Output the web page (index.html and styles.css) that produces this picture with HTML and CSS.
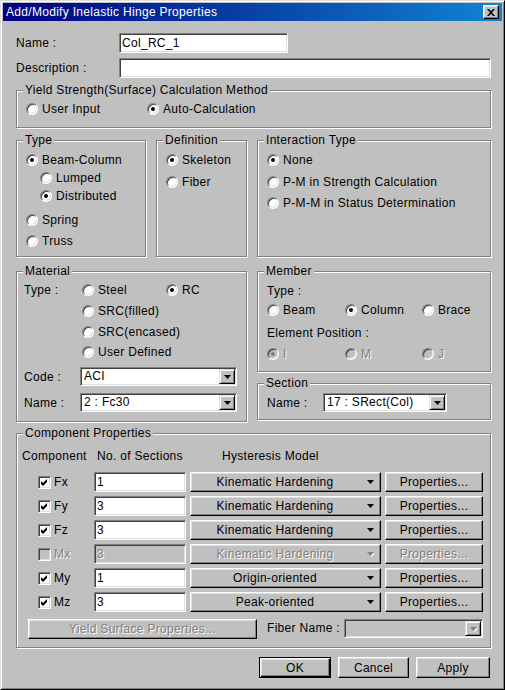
FILE: index.html
```html
<!DOCTYPE html>
<html>
<head>
<meta charset="utf-8">
<title>Add/Modify Inelastic Hinge Properties</title>
<link rel="stylesheet" href="styles.css">
</head>
<body>
<div class="win">
  <div class="titlebar">
    <span class="title">Add/Modify Inelastic Hinge Properties</span>
    <span class="close"><svg width="8" height="7" viewBox="0 0 8 7"><path d="M0 0h2l2 2.2L6 0h2L5 3.5 8 7H6L4 4.8 2 7H0l3-3.5z" fill="#000"/></svg></span>
  </div>
  <div class="content">
    <div class="frow r-name"><span class="flabel">Name :</span><span class="edit w-name">Col_RC_1</span></div>
    <div class="frow r-desc"><span class="flabel">Description :</span><span class="edit w-desc"></span></div>

    <div class="group g-yield">
      <div class="gt">Yield Strength(Surface) Calculation Method</div>
      <div class="gbody pl9">
        <div class="line mt4">
          <span class="opt w121"><span class="rb"></span>User Input</span>
          <span class="opt"><span class="rb on"></span>Auto-Calculation</span>
        </div>
      </div>
    </div>

    <div class="row3">
      <div class="group g-top">
        <div class="gt">Type</div>
        <div class="gbody pl9">
          <div class="opt mt5"><span class="rb on"></span>Beam-Column</div>
          <div class="opt mt2 sub"><span class="rb"></span>Lumped</div>
          <div class="opt mt2 sub"><span class="rb on"></span>Distributed</div>
          <div class="opt mt8"><span class="rb"></span>Spring</div>
          <div class="opt mt5"><span class="rb"></span>Truss</div>
        </div>
      </div>
      <div class="group g-top">
        <div class="gt">Definition</div>
        <div class="gbody pl9">
          <div class="opt mt5"><span class="rb on"></span>Skeleton</div>
          <div class="opt mt6"><span class="rb"></span>Fiber</div>
        </div>
      </div>
      <div class="group g-top">
        <div class="gt">Interaction Type</div>
        <div class="gbody pl9">
          <div class="opt mt5"><span class="rb on"></span>None</div>
          <div class="opt mt6"><span class="rb"></span>P-M in Strength Calculation</div>
          <div class="opt mt5"><span class="rb"></span>P-M-M in Status Determination</div>
        </div>
      </div>
    </div>

    <div class="row2">
      <div class="group g-mat">
        <div class="gt">Material</div>
        <div class="gbody pl7">
          <div class="line mt4">
            <span class="lab58">Type :</span>
            <span class="opt w84"><span class="rb"></span>Steel</span>
            <span class="opt"><span class="rb on"></span>RC</span>
          </div>
          <div class="opt mt5 ind58"><span class="rb"></span>SRC(filled)</div>
          <div class="opt mt5 ind58"><span class="rb"></span>SRC(encased)</div>
          <div class="opt mt4 ind58"><span class="rb"></span>User Defined</div>
          <div class="line mt7">
            <span class="lab56">Code :</span>
            <span class="combo w157"><span class="val">ACI</span><span class="dd"><svg class="tri" width="7" height="4" viewBox="0 0 7 4"><path d="M0 0h7L3.5 4z"/></svg></span></span>
          </div>
          <div class="line mt7">
            <span class="lab56">Name :</span>
            <span class="combo w157"><span class="val">2 : Fc30</span><span class="dd"><svg class="tri" width="7" height="4" viewBox="0 0 7 4"><path d="M0 0h7L3.5 4z"/></svg></span></span>
          </div>
        </div>
      </div>
      <div class="rcol">
        <div class="group g-mem">
          <div class="gt">Member</div>
          <div class="gbody pl9">
            <div class="line mt5">Type :</div>
            <div class="line mt3">
              <span class="opt w78"><span class="rb"></span>Beam</span>
              <span class="opt w77"><span class="rb on"></span>Column</span>
              <span class="opt"><span class="rb"></span>Brace</span>
            </div>
            <div class="line mt7">Element Position :</div>
            <div class="line mt5 dis">
              <span class="opt w78"><span class="rb off on"></span>I</span>
              <span class="opt w77"><span class="rb off"></span>M</span>
              <span class="opt"><span class="rb off"></span>J</span>
            </div>
          </div>
        </div>
        <div class="group g-sec">
          <div class="gt">Section</div>
          <div class="gbody pl9">
            <div class="line mt3">
              <span class="lab56">Name :</span>
              <span class="combo w124"><span class="val">17 : SRect(Col)</span><span class="dd"><svg class="tri" width="7" height="4" viewBox="0 0 7 4"><path d="M0 0h7L3.5 4z"/></svg></span></span>
            </div>
          </div>
        </div>
      </div>
    </div>

    <div class="group g-comp">
      <div class="gt">Component Properties</div>
      <div class="gbody">
        <div class="chead">
          <span class="h1">Component</span>
          <span class="h2">No. of Sections</span>
          <span>Hysteresis Model</span>
        </div>
        <div class="crow mt8">
          <span class="ccell"><span class="cb"><svg width="7" height="7" viewBox="0 0 7 7"><path d="M0 2L2 4L6 0V3L2 7L0 5Z"/></svg></span>Fx</span>
          <span class="edit">1</span>
          <span class="btn hyst"><span class="ht">Kinematic Hardening</span><svg class="tri" width="7" height="4" viewBox="0 0 7 4"><path d="M0 0h7L3.5 4z"/></svg></span>
          <span class="btn">Properties...</span>
        </div>
        <div class="crow mt4">
          <span class="ccell"><span class="cb"><svg width="7" height="7" viewBox="0 0 7 7"><path d="M0 2L2 4L6 0V3L2 7L0 5Z"/></svg></span>Fy</span>
          <span class="edit">3</span>
          <span class="btn hyst"><span class="ht">Kinematic Hardening</span><svg class="tri" width="7" height="4" viewBox="0 0 7 4"><path d="M0 0h7L3.5 4z"/></svg></span>
          <span class="btn">Properties...</span>
        </div>
        <div class="crow mt4">
          <span class="ccell"><span class="cb"><svg width="7" height="7" viewBox="0 0 7 7"><path d="M0 2L2 4L6 0V3L2 7L0 5Z"/></svg></span>Fz</span>
          <span class="edit">3</span>
          <span class="btn hyst"><span class="ht">Kinematic Hardening</span><svg class="tri" width="7" height="4" viewBox="0 0 7 4"><path d="M0 0h7L3.5 4z"/></svg></span>
          <span class="btn">Properties...</span>
        </div>
        <div class="crow mt4 dis">
          <span class="ccell"><span class="cb off"></span>Mx</span>
          <span class="edit off">3</span>
          <span class="btn hyst"><span class="ht">Kinematic Hardening</span><svg class="tri" width="7" height="4" viewBox="0 0 7 4"><path d="M0 0h7L3.5 4z"/></svg></span>
          <span class="btn">Properties...</span>
        </div>
        <div class="crow mt4">
          <span class="ccell"><span class="cb"><svg width="7" height="7" viewBox="0 0 7 7"><path d="M0 2L2 4L6 0V3L2 7L0 5Z"/></svg></span>My</span>
          <span class="edit">1</span>
          <span class="btn hyst"><span class="ht">Origin-oriented</span><svg class="tri" width="7" height="4" viewBox="0 0 7 4"><path d="M0 0h7L3.5 4z"/></svg></span>
          <span class="btn">Properties...</span>
        </div>
        <div class="crow mt4">
          <span class="ccell"><span class="cb"><svg width="7" height="7" viewBox="0 0 7 7"><path d="M0 2L2 4L6 0V3L2 7L0 5Z"/></svg></span>Mz</span>
          <span class="edit">3</span>
          <span class="btn hyst"><span class="ht">Peak-oriented</span><svg class="tri" width="7" height="4" viewBox="0 0 7 4"><path d="M0 0h7L3.5 4z"/></svg></span>
          <span class="btn">Properties...</span>
        </div>
        <div class="cbottom">
          <span class="btn ysp dis">Yield Surface Properties...</span>
          <span class="fnlab">Fiber Name :</span>
          <span class="combo off w139"><span class="val"></span><span class="dd dis"><svg class="tri" width="7" height="4" viewBox="0 0 7 4"><path d="M0 0h7L3.5 4z"/></svg></span></span>
        </div>
      </div>
    </div>

    <div class="buttons">
      <span class="btn def w72">OK</span>
      <span class="btn w71">Cancel</span>
      <span class="btn w74">Apply</span>
    </div>
  </div>
</div>
</body>
</html>
```

FILE: styles.css
```css
html, body {
  margin: 0;
  padding: 0;
  background: #c0c0c0;
}
body {
  font-family: "Liberation Sans", Arial, sans-serif;
  font-size: 12px;
  letter-spacing: 0.3px;
  color: #000;
}
.win {
  width: 505px;
  height: 690px;
  box-sizing: border-box;
  background: #c0c0c0;
  border: 1px solid;
  border-color: #dfdfdf #000 #000 #dfdfdf;
  box-shadow: inset 1px 1px 0 #fff, inset -1px -1px 0 #808080;
  padding: 2px;
}
.titlebar {
  height: 18px;
  display: flex;
  align-items: center;
  justify-content: space-between;
  background: linear-gradient(to right, #000080, #1084d0);
  color: #fff;
  padding: 0 3px 0 3px;
}
.title {
  line-height: 18px;
}
.close {
  width: 16px;
  height: 14px;
  box-sizing: border-box;
  background: #c0c0c0;
  border: 1px solid;
  border-color: #fff #000 #000 #fff;
  box-shadow: inset -1px -1px 0 #808080, inset 1px 1px 0 #dfdfdf;
  display: flex;
  align-items: center;
  justify-content: center;
}
.content {
  padding: 12px 11px 0 13px;
}
.frow {
  display: flex;
  align-items: center;
  height: 20px;
}
.r-desc { margin-top: 5px; }
.flabel { width: 103px; }
.edit {
  display: block;
  height: 20px;
  box-sizing: border-box;
  background: #fff;
  border: 1px solid;
  border-color: #808080 #fff #fff #808080;
  box-shadow: inset 1px 1px 0 #404040, inset -1px -1px 0 #dfdfdf;
  padding: 1px 2px;
  line-height: 16px;
  white-space: nowrap;
  overflow: hidden;
}
.edit.off { background: #c0c0c0; }
.w-name { width: 169px; }
.w-desc { width: 372px; }

.group {
  box-sizing: border-box;
  border: 1px solid #808080;
  box-shadow: 1px 1px 0 #fff, inset 1px 1px 0 #fff;
}
.gt {
  margin: -8px 0 0 6px;
  padding: 0 2px;
  width: fit-content;
  height: 14px;
  line-height: 14px;
  background: #c0c0c0;
  white-space: nowrap;
}
.pl9 { padding-left: 9px; }
.pl7 { padding-left: 7px; }
.mt2 { margin-top: 2px; }
.mt3 { margin-top: 3px; }
.mt4 { margin-top: 4px; }
.mt5 { margin-top: 5px; }
.mt6 { margin-top: 6px; }
.mt7 { margin-top: 7px; }
.mt8 { margin-top: 8px; }

.g-yield { margin-top: 12px; height: 38px; }
.line {
  display: flex;
  align-items: center;
  min-height: 16px;
  white-space: nowrap;
}
.opt {
  display: flex;
  align-items: center;
  gap: 4px;
  height: 16px;
  white-space: nowrap;
}
.sub { margin-left: 14px; }
.ind58 { margin-left: 58px; }
.w121 { width: 121px; }
.w84 { width: 84px; }
.w78 { width: 78px; }
.w77 { width: 77px; }
.lab58 { width: 58px; }
.lab56 { width: 56px; flex: none; }

.rb {
  position: relative;
  flex: none;
  width: 12px;
  height: 12px;
  box-sizing: border-box;
  border-radius: 50%;
  background: #fff;
  border: 1px solid;
  border-color: #808080 #fff #fff #808080;
  box-shadow: inset 1px 1px 0 #404040, inset -1px -1px 0 #dfdfdf;
}
.rb.on::after {
  content: "";
  position: absolute;
  left: 3px;
  top: 3px;
  width: 4px;
  height: 4px;
  border-radius: 50%;
  background: #000;
}
.rb.off { background: #c0c0c0; }
.rb.off.on::after { background: #808080; }

.dis, .dis .btn, .btn.dis {
  color: #808080;
  text-shadow: 1px 1px 0 #fff;
}
.dis .tri, .dd.dis .tri { fill: #808080; filter: drop-shadow(1px 1px 0 #fff); }

.row3 {
  display: flex;
  gap: 10px;
  margin-top: 12px;
}
.g-top { height: 117px; }
.row3 .g-top:nth-child(1) { width: 130px; }
.row3 .g-top:nth-child(2) { width: 91px; }
.row3 .g-top:nth-child(3) { width: 234px; }

.row2 {
  display: grid;
  grid-template-columns: 231px 234px;
  column-gap: 10px;
  margin-top: 14px;
}
.g-mat { height: 151px; }
.g-mem { height: 101px; }
.g-sec { height: 37px; margin-top: 11px; }

.combo {
  display: flex;
  height: 19px;
  box-sizing: border-box;
  background: #fff;
  border: 1px solid;
  border-color: #808080 #fff #fff #808080;
  box-shadow: inset 1px 1px 0 #404040, inset -1px -1px 0 #dfdfdf;
  padding: 1px;
}
.combo.off { background: #c0c0c0; }
.combo .val {
  flex: 1;
  padding-left: 2px;
  line-height: 15px;
  white-space: nowrap;
  overflow: hidden;
}
.w157 { width: 157px; }
.w124 { width: 124px; }
.w139 { width: 139px; }
.dd {
  width: 16px;
  height: 15px;
  box-sizing: border-box;
  background: #c0c0c0;
  border: 1px solid;
  border-color: #dfdfdf #000 #000 #dfdfdf;
  box-shadow: inset 1px 1px 0 #fff, inset -1px -1px 0 #808080;
  display: flex;
  align-items: center;
  justify-content: center;
  flex: none;
}
.tri { fill: #000; display: block; }

.btn {
  display: flex;
  align-items: center;
  justify-content: center;
  height: 20px;
  box-sizing: border-box;
  background: #c0c0c0;
  border: 1px solid;
  border-color: #fff #000 #000 #fff;
  box-shadow: inset -1px -1px 0 #808080, inset 1px 1px 0 #dfdfdf;
  white-space: nowrap;
}

.g-comp { margin-top: 11px; height: 215px; }
.chead {
  display: flex;
  height: 16px;
  align-items: center;
  margin: 8px 0 0 5px;
  white-space: nowrap;
}
.h1 { width: 75px; }
.h2 { width: 125px; }
.crow {
  display: grid;
  grid-template-columns: 52px 92px 191px 98px;
  column-gap: 4px;
  height: 20px;
  margin-left: 21px;
}
.ccell {
  display: flex;
  align-items: center;
  gap: 3px;
}
.cb {
  width: 13px;
  height: 13px;
  box-sizing: border-box;
  background: #fff;
  border: 1px solid;
  border-color: #808080 #fff #fff #808080;
  box-shadow: inset 1px 1px 0 #404040, inset -1px -1px 0 #dfdfdf;
  display: flex;
  align-items: center;
  justify-content: center;
  flex: none;
}
.cb svg { fill: #000; display: block; }
.cb.off { background: #c0c0c0; }
.hyst {
  justify-content: space-between;
  padding: 0 6px 0 0;
}
.ht {
  flex: 1;
  text-align: center;
  padding-right: 8px;
}
.cbottom {
  display: flex;
  align-items: flex-start;
  margin: 7px 0 0 11px;
}
.ysp { width: 229px; }
.fnlab {
  width: 77px;
  margin-left: 10px;
  line-height: 19px;
  white-space: nowrap;
}

.buttons {
  display: flex;
  justify-content: flex-end;
  gap: 7px;
  margin: 9px 1px 0 0;
}
.buttons .btn { height: 21px; }
.btn.def {
  border-color: #000;
  box-shadow: inset 1px 1px 0 #fff, inset -1px -1px 0 #000, inset -2px -2px 0 #808080, inset 2px 2px 0 #dfdfdf;
}
.w72 { width: 72px; }
.w71 { width: 71px; }
.w74 { width: 74px; }
```
